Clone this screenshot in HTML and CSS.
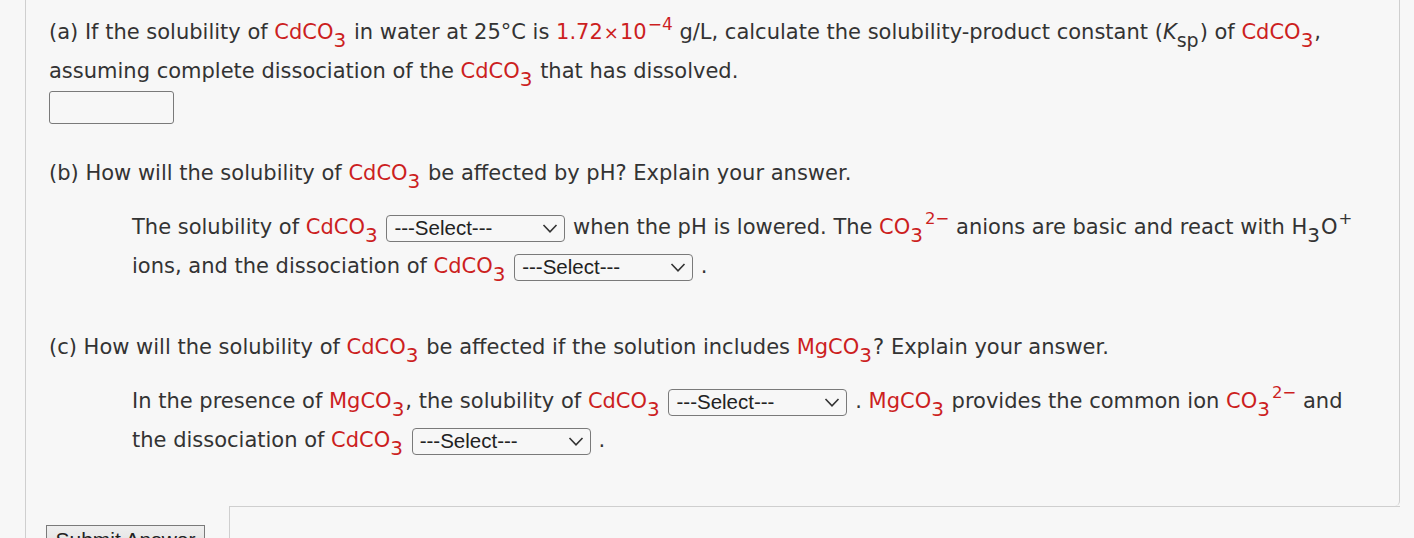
FILE: index.html
```html
<!DOCTYPE html>
<html lang="en">
<head>
<meta charset="utf-8">
<title>Solubility question</title>
<link rel="stylesheet" href="styles.css">
</head>
<body>
<div class="page">
  <div class="panel">
    <p class="q">(a) If the solubility of <span class="chem">CdCO<sub>3</sub></span> in water at 25°C is <span class="chem">1.72<span class="times">×</span>10<sup>−4</sup></span> g/L, calculate the solubility-product constant (<i>K</i><sub class="ksp">sp</sub>) of <span class="chem">CdCO<sub>3</sub></span>, assuming complete dissociation of the <span class="chem">CdCO<sub>3</sub></span> that has dissolved.</p>
    <div class="answer"><input class="num" type="text" aria-label="Ksp"></div>

    <p class="q q-next">(b) How will the solubility of <span class="chem">CdCO<sub>3</sub></span> be affected by pH? Explain your answer.</p>
    <p class="stmt">The solubility of <span class="chem">CdCO<sub>3</sub></span> <span class="sel"><select><option>---Select---</option></select><svg class="chev" viewBox="0 0 16 9" width="16" height="9"><path d="M1.5 1 L8 7.8 L14.5 1" fill="none" stroke="#333" stroke-width="1.6"/></svg></span> when the pH is lowered. The <span class="chem">CO<sub>3</sub><sup class="chg">2−</sup></span> anions are basic and react with H<sub>3</sub>O<sup class="chg">+</sup> ions, and the dissociation of <span class="chem">CdCO<sub>3</sub></span> <span class="sel"><select><option>---Select---</option></select><svg class="chev" viewBox="0 0 16 9" width="16" height="9"><path d="M1.5 1 L8 7.8 L14.5 1" fill="none" stroke="#333" stroke-width="1.6"/></svg></span> .</p>

    <p class="q q-c">(c) How will the solubility of <span class="chem">CdCO<sub>3</sub></span> be affected if the solution includes <span class="chem">MgCO<sub>3</sub></span>? Explain your answer.</p>
    <p class="stmt">In the presence of <span class="chem">MgCO<sub>3</sub></span>, the solubility of <span class="chem">CdCO<sub>3</sub></span> <span class="sel"><select><option>---Select---</option></select><svg class="chev" viewBox="0 0 16 9" width="16" height="9"><path d="M1.5 1 L8 7.8 L14.5 1" fill="none" stroke="#333" stroke-width="1.6"/></svg></span> . <span class="chem">MgCO<sub>3</sub></span> provides the common ion <span class="chem">CO<sub>3</sub><sup class="chg">2−</sup></span> and the dissociation of <span class="chem">CdCO<sub>3</sub></span> <span class="sel"><select><option>---Select---</option></select><svg class="chev" viewBox="0 0 16 9" width="16" height="9"><path d="M1.5 1 L8 7.8 L14.5 1" fill="none" stroke="#333" stroke-width="1.6"/></svg></span> .</p>
  </div>
  <div class="footer">
    <div class="btn-cell"><button class="submit" type="button">Submit Answer</button></div>
    <div class="aside"></div>
  </div>
</div>
</body>
</html>
```

FILE: styles.css
```css
html, body {
  margin: 0;
  padding: 0;
  background: #f7f7f7;
}

body {
  font-family: "DejaVu Sans", Verdana, sans-serif;
  font-size: 21px;
  color: #333;
  overflow: hidden;
  height: 538px;
}

.page {
  margin: 0 14px 0 25px;
  border-left: 1px solid #cfcfcf;
  min-height: 538px;
}

.panel {
  padding: 13px 29px 46px 23px;
  border-right: 1px solid #cfcfcf;
  border-bottom-right-radius: 5px;
}

p {
  margin: 0;
  line-height: 39px;
}

.q-next { margin-top: 30px; }
.q-c { margin-top: 42px; }

.stmt {
  margin: 15px 0 0 83px;
}

.chem { color: #cc1f1f; }

.times {
  font-size: 18px;
  margin: 0 1px;
}

sub {
  font-size: 20px;
  line-height: 0;
  vertical-align: -8px;
  margin-right: 1px;
}

sub.ksp { font-size: 19px; }

sup {
  font-size: 17px;
  line-height: 0;
  vertical-align: 9px;
  margin-left: 1px;
}

sup.chg {
  font-size: 16.5px;
  vertical-align: 10px;
}

.num {
  display: block;
  box-sizing: border-box;
  width: 125px;
  height: 33px;
  margin: 0;
  border: 1px solid #7a7a7a;
  border-radius: 3px;
  background: transparent;
}

.sel {
  position: relative;
  display: inline-block;
  vertical-align: middle;
  margin: 0 1px;
  line-height: 0;
}

.sel select {
  -webkit-appearance: none;
  appearance: none;
  box-sizing: border-box;
  width: 179px;
  height: 27px;
  margin: 0;
  padding: 0 0 1px 7px;
  border: 1px solid #7a7a7a;
  border-radius: 4px;
  background: transparent;
  font-family: "Liberation Sans", Arial, sans-serif;
  font-size: 20.5px;
  color: #222;
}

.chev {
  position: absolute;
  right: 7px;
  top: 9px;
}

.footer {
  display: flex;
}

.btn-cell {
  width: 203px;
  flex: none;
}

.submit {
  display: block;
  margin: 19px 0 0 20px;
  width: 159px;
  height: 30px;
  padding: 0;
  border: 1px solid #7a7a7a;
  border-radius: 0;
  background: linear-gradient(#efefef, #dcdcdc);
  font-family: "Liberation Sans", Arial, sans-serif;
  font-size: 21px;
  color: #222;
}

.aside {
  flex: 1;
  height: 40px;
  border-top: 1px solid #cfcfcf;
  border-left: 1px solid #cfcfcf;
}
```
